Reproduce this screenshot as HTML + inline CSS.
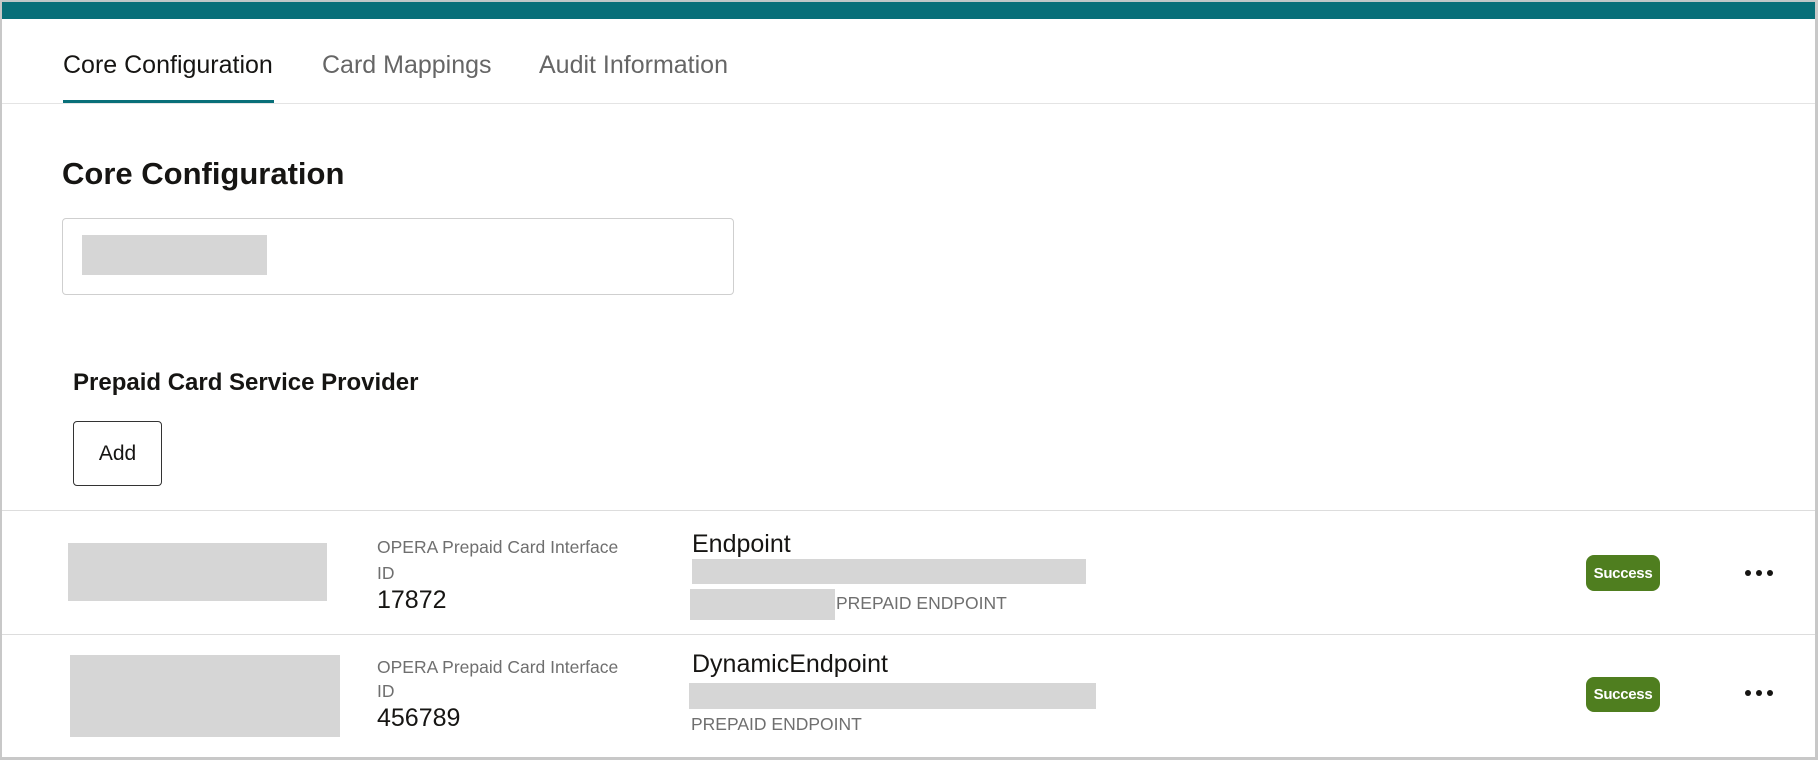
<!DOCTYPE html>
<html><head><meta charset="utf-8"><style>
*{margin:0;padding:0;box-sizing:border-box}
body{width:1818px;height:760px;background:#fff;font-family:"Liberation Sans",sans-serif;position:relative;overflow:hidden}
.frame{position:absolute;left:0;top:0;width:1818px;height:760px;border:3px solid #c8c8c8;border-top:none;border-left:2px solid #c8c8c8}
.a{position:absolute;white-space:nowrap}
.g{position:absolute;background:#d6d6d6}
.tab{font-size:25px;color:#666;top:51px}
.lbl{font-size:17.5px;color:#6f6f6f}
.num{font-size:25px;color:#161513}
.badge{position:absolute;background:#4f7e1f;color:#fff;font-weight:bold;font-size:15px;border-radius:8px;display:flex;align-items:center;justify-content:center;letter-spacing:-0.3px}
.dots{position:absolute;display:flex;gap:5px}
.dots i{width:6px;height:6px;border-radius:50%;background:#161513;display:block}
</style></head><body>
<div class="a" style="left:0;top:0;width:1818px;height:19px;background:#086f79"></div>
<div class="a" style="left:0;top:0;width:1818px;height:2px;background:#bfc7c8"></div>
<div class="a tab" style="left:63px;color:#161513">Core Configuration</div>
<div class="a tab" style="left:322px">Card Mappings</div>
<div class="a tab" style="left:539px">Audit Information</div>
<div class="a" style="left:63px;top:100px;width:211px;height:4px;background:#086f79"></div>
<div class="a" style="left:0;top:103px;width:1818px;height:1px;background:#e4e4e4"></div>
<div class="a" style="left:62px;top:156px;font-size:31px;font-weight:bold;color:#161513">Core Configuration</div>
<div class="a" style="left:62px;top:218px;width:672px;height:77px;border:1px solid #cfcfcf;border-radius:4px"></div>
<div class="g" style="left:82px;top:235px;width:185px;height:40px"></div>
<div class="a" style="left:73px;top:369px;font-size:24px;font-weight:bold;color:#161513">Prepaid Card Service Provider</div>
<div class="a" style="left:73px;top:421px;width:89px;height:65px;border:1px solid #333;border-radius:4px;font-size:21px;color:#161513;display:flex;align-items:center;justify-content:center">Add</div>
<div class="a" style="left:0;top:510px;width:1818px;height:1px;background:#ddd"></div>
<div class="a" style="left:0;top:634px;width:1818px;height:1px;background:#ddd"></div>

<div class="g" style="left:68px;top:543px;width:259px;height:58px"></div>
<div class="a lbl" style="left:377px;top:537px">OPERA Prepaid Card Interface</div>
<div class="a lbl" style="left:377px;top:563px">ID</div>
<div class="a num" style="left:377px;top:586px">17872</div>
<div class="a num" style="left:692px;top:530px">Endpoint</div>
<div class="g" style="left:692px;top:559px;width:394px;height:25px"></div>
<div class="g" style="left:690px;top:589px;width:145px;height:31px"></div>
<div class="a lbl" style="left:836px;top:593px">PREPAID ENDPOINT</div>
<div class="badge" style="left:1586px;top:555px;width:74px;height:36px">Success</div>
<div class="dots" style="left:1745px;top:570px"><i></i><i></i><i></i></div>

<div class="g" style="left:70px;top:655px;width:270px;height:82px"></div>
<div class="a lbl" style="left:377px;top:657px">OPERA Prepaid Card Interface</div>
<div class="a lbl" style="left:377px;top:681px">ID</div>
<div class="a num" style="left:377px;top:704px">456789</div>
<div class="a num" style="left:692px;top:650px">DynamicEndpoint</div>
<div class="g" style="left:689px;top:683px;width:407px;height:26px"></div>
<div class="a lbl" style="left:691px;top:714px">PREPAID ENDPOINT</div>
<div class="badge" style="left:1586px;top:677px;width:74px;height:35px">Success</div>
<div class="dots" style="left:1745px;top:690px"><i></i><i></i><i></i></div>
<div class="frame"></div>
</body></html>
